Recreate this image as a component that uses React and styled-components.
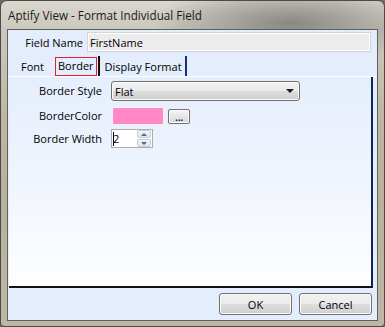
import React from 'react'
import styled, { createGlobalStyle } from 'styled-components'

const GlobalStyle = createGlobalStyle`
  html, body {
    margin: 0;
    padding: 0;
    background: #6a6a66;
  }
  * { box-sizing: border-box; }
`

const font = `"Open Sans", "Noto Sans", "DejaVu Sans", sans-serif`

const Window = styled.div`
  width: 385px;
  height: 327px;
  display: flex;
  flex-direction: column;
  border: 1px solid #4b4b48;
  border-radius: 7px 7px 4px 4px;
  background:
    radial-gradient(ellipse 140px 40px at 290px 22px, rgba(80, 80, 78, 0.55), rgba(80, 80, 78, 0) 100%),
    linear-gradient(to bottom, #d9d7cf 0, #cbc8bd 28px, #bcb6a3 120px, #b8b19d 200px, #bdb7a5 327px);
  font-family: ${font};
  font-size: 11px;
  color: #000;
  overflow: hidden;
`

const TitleBar = styled.div`
  height: 28px;
  flex: none;
  display: flex;
  align-items: center;
  padding-left: 7px;
  font-size: 11.7px;
  color: #1b1b1b;
`

const Client = styled.div`
  flex: 1;
  margin: 0 6px 5px 6px;
  border: 1px solid #5f5f5c;
  background: #e3edfb;
  display: flex;
  flex-direction: column;
`

const FieldRow = styled.div`
  display: flex;
  align-items: center;
  margin-top: 2px;
  height: 20px;
`

const FieldLabel = styled.label`
  width: 75px;
  text-align: right;
  margin-right: 4px;
`

const FieldInput = styled.div`
  flex: 1;
  height: 20px;
  margin-right: 6px;
  border: 1px solid #d2d4d8;
  box-shadow: inset 0 0 0 1px #ffffff;
  background: #ececec;
  display: flex;
  align-items: center;
  padding-left: 2px;
`

const TabStrip = styled.div`
  display: flex;
  align-items: stretch;
  height: 22px;
  margin-top: 3px;
  padding-left: 6px;
  border-bottom: 1px solid #ffffff;
`

const Tab = styled.div`
  display: flex;
  align-items: center;
  padding: 0 ${p => p.$px}px 2px;
  margin-top: ${p => (p.$active ? '2px' : '4px')};
  margin-right: ${p => p.$mr || 0}px;
  border: 1px solid ${p => (p.$active ? '#e4202a' : 'transparent')};
`

const Divider = styled.div`
  width: 2px;
  margin: 1px 3px 0 1px;
  background: ${p => p.$color};
`

const Panel = styled.div`
  flex: 1;
  margin: 0 4px 0 1px;
  border-right: 2px solid #0d2557;
  border-bottom: 2px solid #111;
  background: linear-gradient(to bottom, #e5eefc 0%, #f0f5fd 50%, #fdfeff 100%);
  display: grid;
  grid-template-columns: 93px auto;
  grid-auto-rows: min-content;
  column-gap: 9px;
  align-content: start;
  align-items: center;
  padding-top: 4px;
`

const RowLabel = styled.div`
  text-align: right;
  height: ${p => p.$h}px;
  line-height: ${p => p.$h}px;
  margin-bottom: ${p => p.$mb || 0}px;
`

const Select = styled.div`
  width: 189px;
  height: 20px;
  margin-bottom: 5px;
  border: 1px solid #707070;
  border-radius: 3px;
  background: linear-gradient(to bottom, #f3f3f3 0%, #ebebeb 48%, #dddddd 52%, #cfcfcf 100%);
  box-shadow: inset 0 0 0 1px #fbfbfb;
  display: flex;
  align-items: center;
  justify-content: space-between;
  padding: 0 5px 0 3px;
`

const Arrow = styled.div`
  width: 0;
  height: 0;
  border-left: 4px solid transparent;
  border-right: 4px solid transparent;
  border-top: 4px solid #1c1c1c;
`

const ColorRow = styled.div`
  display: flex;
  align-items: center;
  gap: 4px;
  height: 20px;
  margin-bottom: 3px;
`

const Swatch = styled.div`
  width: 52px;
  height: 18px;
  margin-left: 1px;
  background: ${p => p.$color};
  border: 1px solid #f2f4f8;
`

const SmallButton = styled.div`
  width: 22px;
  height: 15px;
  border: 1px solid #707070;
  border-radius: 2px;
  background: linear-gradient(to bottom, #f4f4f4 0%, #e6e6e6 50%, #d6d6d6 100%);
  box-shadow: inset 0 0 0 1px #fcfcfc;
  display: flex;
  align-items: flex-end;
  justify-content: center;
  font-size: 11px;
  line-height: 12px;
  font-weight: 600;
  letter-spacing: -0.3px;
  color: #101030;
`

const Spin = styled.div`
  width: 42px;
  height: 19px;
  border: 1px solid #abadb3;
  background: #fff;
  display: flex;
  align-items: center;
  padding-left: 1px;
`

const SpinText = styled.div`
  flex: 1;
  display: flex;
  align-items: center;
  line-height: 14px;
`

const Caret = styled.span`
  display: inline-block;
  width: 1px;
  height: 14px;
  background: #000;
  margin-right: -1px;
`

const SpinButtons = styled.div`
  width: 14px;
  height: 17px;
  margin-right: 1px;
  display: flex;
  flex-direction: column;
  gap: 1px;
`

const SpinButton = styled.div`
  flex: 1;
  border: 1px solid #c9ccd2;
  border-radius: 2px;
  background: linear-gradient(to bottom, #f4f5f7, #e2e4e8);
  display: flex;
  align-items: center;
  justify-content: center;
`

const SpinArrow = styled.div`
  width: 0;
  height: 0;
  border-left: 3px solid transparent;
  border-right: 3px solid transparent;
  ${p => (p.$up ? 'border-bottom: 3px solid #4a6aa0;' : 'border-top: 3px solid #4a6aa0;')}
`

const ButtonRow = styled.div`
  height: 32px;
  flex: none;
  display: flex;
  justify-content: flex-end;
  align-items: flex-start;
  gap: 7px;
  padding: 5px 5px 0 0;
`

const DialogButton = styled.div`
  width: 73px;
  height: 22px;
  border: 1px solid #707070;
  border-radius: 3px;
  background: linear-gradient(to bottom, #f2f2f2 0%, #ebebeb 48%, #dddddd 52%, #cfcfcf 100%);
  box-shadow: inset 0 0 0 1px #fcfcfc;
  display: flex;
  align-items: center;
  justify-content: center;
`

export default function App() {
  return (
    <>
      <GlobalStyle />
      <Window>
        <TitleBar>Aptify View - Format Individual Field</TitleBar>
        <Client>
          <FieldRow>
            <FieldLabel>Field Name</FieldLabel>
            <FieldInput>FirstName</FieldInput>
          </FieldRow>
          <TabStrip>
            <Tab $px={6} $mr={4}>Font</Tab>
            <Tab $px={2} $active>Border</Tab>
            <Divider $color="#111" />
            <Tab $px={1}>Display Format</Tab>
            <Divider $color="#12307a" />
          </TabStrip>
          <Panel>
            <RowLabel $h={20} $mb={5}>Border Style</RowLabel>
            <Select>
              <span>Flat</span>
              <Arrow />
            </Select>
            <RowLabel $h={20} $mb={3}>BorderColor</RowLabel>
            <ColorRow>
              <Swatch $color="#ff88c5" />
              <SmallButton>...</SmallButton>
            </ColorRow>
            <RowLabel $h={19}>Border Width</RowLabel>
            <Spin>
              <SpinText>
                <Caret />2
              </SpinText>
              <SpinButtons>
                <SpinButton><SpinArrow $up /></SpinButton>
                <SpinButton><SpinArrow /></SpinButton>
              </SpinButtons>
            </Spin>
          </Panel>
          <ButtonRow>
            <DialogButton>OK</DialogButton>
            <DialogButton>Cancel</DialogButton>
          </ButtonRow>
        </Client>
      </Window>
    </>
  )
}
